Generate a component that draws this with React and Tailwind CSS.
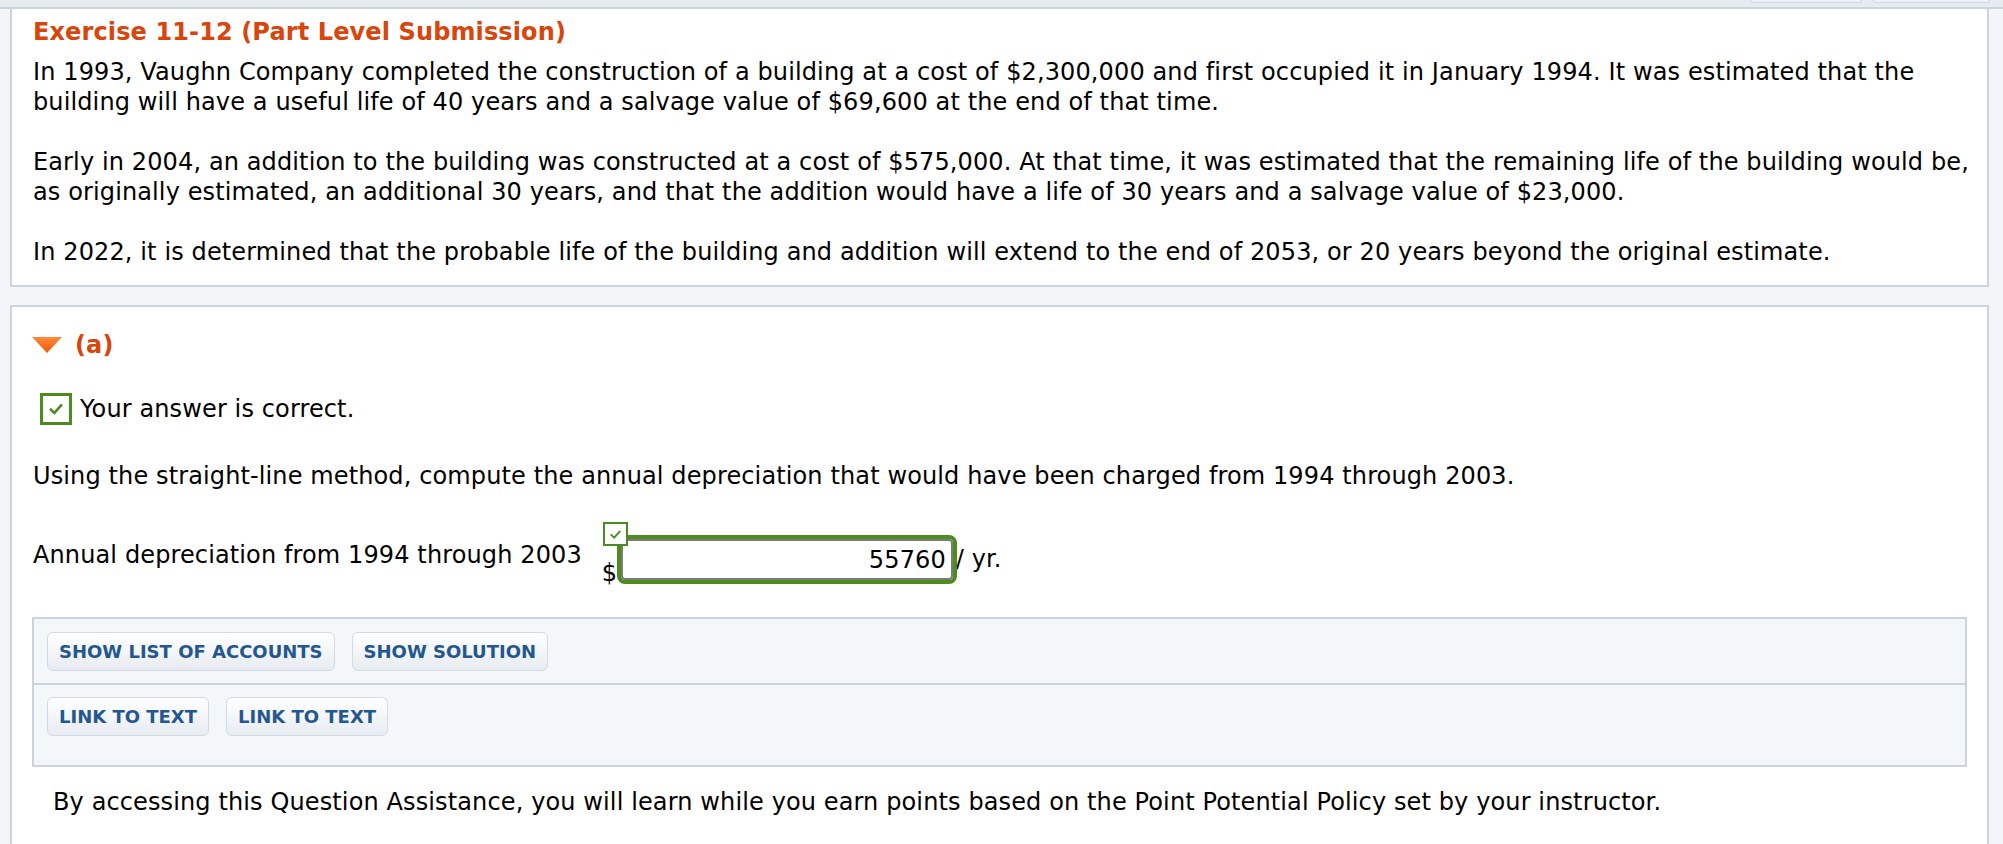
import React from "react";

const Check = ({ size = 14, stroke = 2.2 }) => (
  <svg width={size} height={size} viewBox="0 0 14 14" fill="none">
    <path d="M2.5 7.5 L5.6 10.4 L11.5 3.8" stroke="#4c8a1f" strokeWidth={stroke} strokeLinecap="square" />
  </svg>
);

const Triangle = () => (
  <svg width="30" height="16" viewBox="0 0 30 16">
    <defs>
      <linearGradient id="tri" x1="0" y1="0" x2="0" y2="1">
        <stop offset="0" stopColor="#ff8a3a" />
        <stop offset="1" stopColor="#ef5a06" />
      </linearGradient>
    </defs>
    <polygon points="0,0 30,0 15,16" fill="url(#tri)" />
  </svg>
);

function ActionButton({ children }) {
  return (
    <button className="h-[39px] px-[11px] flex items-center border border-[#d2dae3] rounded-[6px] bg-linear-to-b from-white to-[#e7ecf2] text-[18px] leading-none font-bold tracking-normal text-[#24568f]">
      {children}
    </button>
  );
}

export default function App() {
  return (
    <div className="min-h-[844px] bg-[#f3f6f9] font-['DejaVu_Sans',sans-serif] text-black text-[24px] leading-[30px] tracking-[0.12px] flex flex-col overflow-hidden">
      {/* top strip with bottoms of the header buttons */}
      <div className="h-[9px] bg-[#e6ebf0] border-b-2 border-[#cbd4de] flex justify-end items-start gap-[11px] pr-[13px]">
        <div className="h-[3px] w-[112px] bg-[#eef1f5] border-x border-b border-[#cfd7e0] rounded-b-[6px]" />
        <div className="h-[3px] w-[117px] bg-[#eef1f5] border-x border-b border-[#cfd7e0] rounded-b-[6px]" />
      </div>

      {/* question */}
      <div className="ml-[10px] mr-[14px] bg-white border-x-2 border-b-2 border-[#cbd4de] px-[21px] pt-[8px] pb-[18px]">
        <h1 className="font-bold text-[#d8450d] whitespace-nowrap">Exercise 11-12 (Part Level Submission)</h1>
        <p className="mt-[10px] whitespace-nowrap">
          In 1993, Vaughn Company completed the construction of a building at a cost of $2,300,000 and first occupied it in January 1994. It was estimated that the
          <br />
          building will have a useful life of 40 years and a salvage value of $69,600 at the end of that time.
        </p>
        <p className="mt-[30px] whitespace-nowrap">
          Early in 2004, an addition to the building was constructed at a cost of $575,000. At that time, it was estimated that the remaining life of the building would be,
          <br />
          as originally estimated, an additional 30 years, and that the addition would have a life of 30 years and a salvage value of $23,000.
        </p>
        <p className="mt-[30px] whitespace-nowrap">
          In 2022, it is determined that the probable life of the building and addition will extend to the end of 2053, or 20 years beyond the original estimate.
        </p>
      </div>

      {/* part (a) */}
      <div className="flex-1 ml-[10px] mr-[14px] mt-[18px] bg-white border-x-2 border-t-2 border-[#cbd4de] px-[21px] pt-[23px] pb-[30px]">
        <div className="flex items-center -ml-[1px]">
          <Triangle />
          <span className="ml-[13px] font-bold text-[#d8450d]">(a)</span>
        </div>

        <div className="mt-[33px] ml-[7px] flex items-center">
          <span className="w-[32px] h-[32px] border-[3px] border-[#4e8a22] bg-white flex items-center justify-center">
            <Check size={16} />
          </span>
          <span className="ml-[8px]">Your answer is correct.</span>
        </div>

        <p className="mt-[36px] whitespace-nowrap">
          Using the straight-line method, compute the annual depreciation that would have been charged from 1994 through 2003.
        </p>

        <div className="mt-[31px] flex items-start">
          <span className="mt-[18px] whitespace-nowrap">Annual depreciation from 1994 through 2003</span>
          <div className="relative ml-[35px] mt-[13px]">
            <span className="absolute -left-[14px] -top-[13px] z-10 w-[25px] h-[24px] border-2 border-[#4e8a22] bg-white flex items-center justify-center">
              <Check size={13} stroke={2} />
            </span>
            <span className="absolute -left-[15px] top-[26px] leading-none">$</span>
            <div className="w-[340px] h-[49px] border-4 border-[#4f8a1d] rounded-[8px]">
              <div className="h-full border-2 border-[#7b7b7b] rounded-[4px] bg-white flex items-center justify-end pr-[5px]">
                55760
              </div>
            </div>
          </div>
          <span className="mt-[22px] -ml-[1px] whitespace-nowrap">/ yr.</span>
        </div>

        <div className="mt-[33px] -mx-[1px] border-2 border-[#cbd4de] bg-[#f4f7fa]">
          <div className="flex gap-[17px] pl-[13px] pt-[13px] pb-[12px] border-b-2 border-[#cbd4de]">
            <ActionButton>SHOW LIST OF ACCOUNTS</ActionButton>
            <ActionButton>SHOW SOLUTION</ActionButton>
          </div>
          <div className="flex gap-[17px] pl-[13px] pt-[12px] pb-[29px]">
            <ActionButton>LINK TO TEXT</ActionButton>
            <ActionButton>LINK TO TEXT</ActionButton>
          </div>
        </div>

        <p className="mt-[20px] pl-[20px] whitespace-nowrap">
          By accessing this Question Assistance, you will learn while you earn points based on the Point Potential Policy set by your instructor.
        </p>
      </div>
    </div>
  );
}
